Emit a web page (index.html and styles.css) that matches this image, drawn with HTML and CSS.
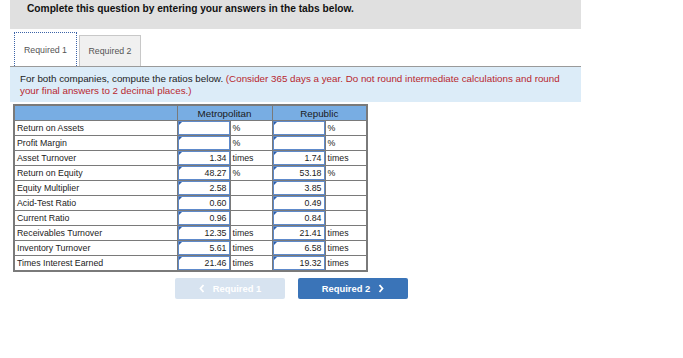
FILE: index.html
```html
<!DOCTYPE html>
<html lang="en">
<head>
<meta charset="utf-8">
<title>Ratios</title>
<link rel="stylesheet" href="styles.css">
</head>
<body>
<div class="wrap">
  <div class="banner">Complete this question by entering your answers in the tabs below.</div>

  <div class="tabs">
    <div class="tab tab-active">Required 1</div>
    <div class="tab">Required 2</div>
  </div>

  <p class="instructions">For both companies, compute the ratios below. <span class="note">(Consider 365 days a year. Do not round intermediate calculations and round your final answers to 2 decimal places.)</span></p>

  <table class="ratios">
    <colgroup>
      <col class="c-label"><col class="c-input"><col class="c-unit"><col class="c-input"><col class="c-unit">
    </colgroup>
    <thead>
      <tr><th></th><th colspan="2">Metropolitan</th><th colspan="2">Republic</th></tr>
    </thead>
    <tbody>
      <tr><td class="label">Return on Assets</td><td class="in"><span class="box"></span></td><td class="unit">%</td><td class="in"><span class="box"></span></td><td class="unit">%</td></tr>
      <tr><td class="label">Profit Margin</td><td class="in"><span class="box"></span></td><td class="unit">%</td><td class="in"><span class="box"></span></td><td class="unit">%</td></tr>
      <tr><td class="label">Asset Turnover</td><td class="in"><span class="box">1.34</span></td><td class="unit">times</td><td class="in"><span class="box">1.74</span></td><td class="unit">times</td></tr>
      <tr><td class="label">Return on Equity</td><td class="in"><span class="box">48.27</span></td><td class="unit">%</td><td class="in"><span class="box">53.18</span></td><td class="unit">%</td></tr>
      <tr><td class="label">Equity Multiplier</td><td class="in"><span class="box">2.58</span></td><td class="unit"></td><td class="in"><span class="box">3.85</span></td><td class="unit"></td></tr>
      <tr><td class="label">Acid-Test Ratio</td><td class="in"><span class="box">0.60</span></td><td class="unit"></td><td class="in"><span class="box">0.49</span></td><td class="unit"></td></tr>
      <tr><td class="label">Current Ratio</td><td class="in"><span class="box">0.96</span></td><td class="unit"></td><td class="in"><span class="box">0.84</span></td><td class="unit"></td></tr>
      <tr><td class="label">Receivables Turnover</td><td class="in"><span class="box">12.35</span></td><td class="unit">times</td><td class="in"><span class="box">21.41</span></td><td class="unit">times</td></tr>
      <tr><td class="label">Inventory Turnover</td><td class="in"><span class="box">5.61</span></td><td class="unit">times</td><td class="in"><span class="box">6.58</span></td><td class="unit">times</td></tr>
      <tr><td class="label">Times Interest Earned</td><td class="in"><span class="box">21.46</span></td><td class="unit">times</td><td class="in"><span class="box">19.32</span></td><td class="unit">times</td></tr>
    </tbody>
  </table>

  <div class="nav">
    <button class="btn btn-off" type="button">
      <svg class="chev" width="6" height="9" viewBox="0 0 6 9"><path d="M4.5 1 L1.5 4.5 L4.5 8" fill="none" stroke="currentColor" stroke-width="1.8"/></svg>
      <span>Required 1</span>
    </button>
    <button class="btn btn-on" type="button">
      <span>Required 2</span>
      <svg class="chev" width="6" height="9" viewBox="0 0 6 9"><path d="M1.5 1 L4.5 4.5 L1.5 8" fill="none" stroke="currentColor" stroke-width="1.8"/></svg>
    </button>
  </div>
</div>
</body>
</html>
```

FILE: styles.css
```css
html, body {
  margin: 0;
  padding: 0;
  background: #fff;
}

body {
  font-family: "Liberation Sans", Arial, sans-serif;
  color: #222;
}

.wrap {
  margin-left: 10px;
  width: 571px;
}

.banner {
  background: #e0e0e0;
  height: 29px;
  box-sizing: border-box;
  padding: 3px 0 0 17px;
  font-weight: bold;
  font-size: 10.2px;
  color: #111;
}

.tabs {
  display: flex;
  align-items: flex-end;
  gap: 2px;
  margin-top: 3px;
  padding-left: 4px;
  border-bottom: 1px solid #9a9a9a;
}

.tab {
  box-sizing: border-box;
  width: 62px;
  height: 31px;
  border: 1px solid #c8c8c8;
  border-bottom: none;
  background: #f0f0f0;
  color: #555;
  font-size: 8.8px;
  display: flex;
  align-items: center;
  justify-content: center;
}

.tab-active {
  width: 63px;
  height: 34px;
  background: #fff;
  border: 1px dotted #3b63a8;
  border-bottom: none;
}

.instructions {
  margin: 0;
  background: #dcecf8;
  height: 35px;
  box-sizing: border-box;
  padding: 6px 14px 0 10px;
  font-size: 9.8px;
  line-height: 12px;
  color: #222;
}

.note {
  color: #b8272e;
}

.ratios {
  margin: 2px 0 0 3px;
  border-collapse: collapse;
  table-layout: fixed;
  width: 354px;
  font-size: 8.8px;
  border: 2px solid #7a7a7a;
}

.c-label { width: 163px; }
.c-input { width: 53px; }
.c-unit { width: 42px; }

.ratios th {
  background: #78ade3;
  color: #1a1a1a;
  font-weight: normal;
  font-size: 9.8px;
  height: 14px;
  padding: 0;
  border: 1px solid #7a7a7a;
  text-align: center;
}

.ratios td {
  height: 14px;
  padding: 0;
  border: 1px solid #7a7a7a;
  white-space: nowrap;
}

.ratios td.label {
  padding-left: 2px;
}

.ratios td.unit {
  padding-left: 2px;
}

.ratios td.in {
  padding: 0;
}

.box {
  position: relative;
  display: block;
  box-sizing: border-box;
  height: 14px;
  border: 1px solid #5e8acb;
  padding-right: 2px;
  text-align: right;
  line-height: 12px;
}

/* corner marker on each answer field */
.box::before {
  content: "";
  position: absolute;
  top: 0;
  left: 0;
  width: 0;
  height: 0;
  border-top: 3px solid #2f5fa8;
  border-right: 3px solid transparent;
}

.nav {
  display: flex;
  gap: 13px;
  margin: 6px 0 0 165px;
}

.btn {
  width: 110px;
  height: 21px;
  border: none;
  border-radius: 2px;
  font-family: "Liberation Sans", Arial, sans-serif;
  font-weight: bold;
  font-size: 9.4px;
  color: #fff;
  padding: 0;
  display: flex;
  align-items: center;
  justify-content: center;
  gap: 8px;
}

.btn-off {
  background: #d7e3f0;
}

.btn-on {
  background: #3a74b8;
}

.chev {
  display: block;
}
```
